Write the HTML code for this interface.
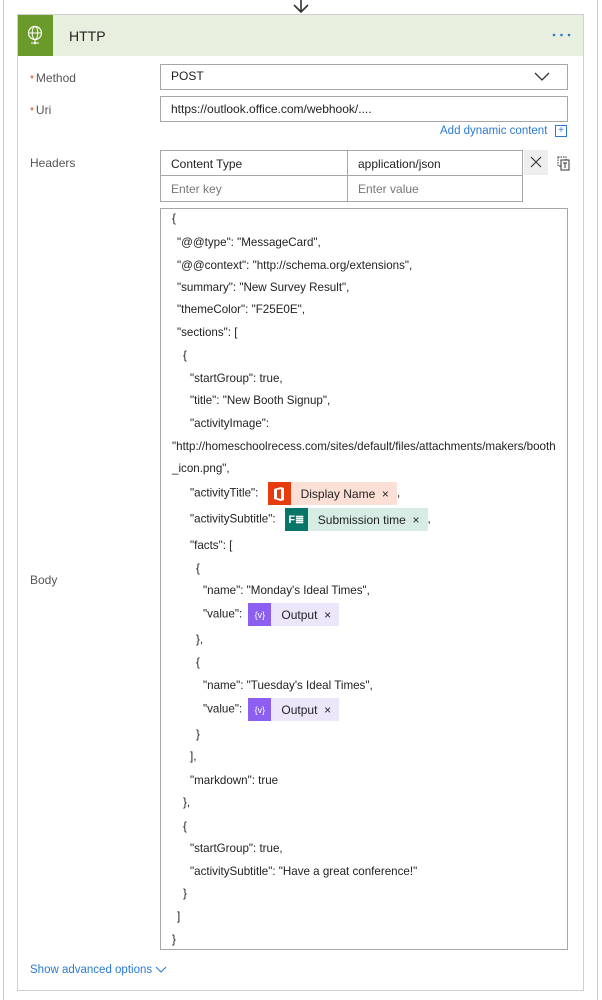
<!DOCTYPE html>
<html><head><meta charset="utf-8"><style>
*{margin:0;padding:0;box-sizing:border-box}
body{width:602px;height:1000px;background:#fff;font-family:"Liberation Sans",sans-serif;color:#222;position:relative;overflow:hidden;font-size:12px}
.a{position:absolute;white-space:nowrap}
.card{position:absolute;left:17px;top:14px;width:567px;height:977px;background:#fff;border:1px solid #d0d0d0}
.lbl{color:#555;font-size:12px}
.req{color:#d83b01;font-size:10px;margin-right:2px}
.box{position:absolute;background:#fff;border:1px solid #a6a6a6}
.l{position:absolute;white-space:nowrap;font-size:11.6px;line-height:14px;color:#222}
.chip{display:inline-flex;align-items:center;height:23px;vertical-align:middle;font-size:12px}
.chip .ic{width:23px;height:23px;display:flex;align-items:center;justify-content:center;color:#fff}
.chip .t{padding:0 8px 0 10px}
</style></head><body>
<div class="a" style="left:3px;top:0;width:1px;height:1000px;background:#ccc"></div>
<div class="a" style="left:597px;top:0;width:1px;height:1000px;background:#ccc"></div>
<svg class="a" style="left:291px;top:0" width="20" height="14"><path d="M10 0V12M3 5L10 12L17 5" stroke="#333" stroke-width="1.6" fill="none"/></svg>
<div class="card"></div>
<div class="a" style="left:18px;top:15px;width:565px;height:41px;background:#e8efdf"></div>
<div class="a" style="left:18px;top:15px;width:35px;height:41px;background:#6a9a2a"></div>
<svg class="a" style="left:26px;top:25px" width="20" height="22"><circle cx="9" cy="8" r="6.5" stroke="#fff" stroke-width="1.2" fill="none"/><ellipse cx="9" cy="8" rx="2.8" ry="6.5" stroke="#fff" stroke-width="1" fill="none"/><path d="M2.5 8H15.5M9 14.5V18M5 18H13" stroke="#fff" stroke-width="1.1"/><circle cx="9" cy="18" r="1.3" fill="#fff"/></svg>
<div class="a" style="left:69px;top:28px;font-size:14px;color:#222">HTTP</div>
<svg class="a" style="left:552px;top:33px" width="20" height="4"><circle cx="2" cy="2" r="1.3" fill="#2a7ad2"/><circle cx="9.5" cy="2" r="1.3" fill="#2a7ad2"/><circle cx="17" cy="2" r="1.3" fill="#2a7ad2"/></svg>

<div class="a lbl" style="left:30px;top:71px"><span class="req">*</span>Method</div>
<div class="box" style="left:160px;top:64px;width:408px;height:26px"></div>
<div class="a" style="left:171px;top:69px;font-size:12px">POST</div>
<svg class="a" style="left:533px;top:71px" width="18" height="12"><path d="M2 2L9 9L16 2" stroke="#333" stroke-width="1.3" fill="none"/></svg>
<div class="a lbl" style="left:30px;top:103px"><span class="req">*</span>Uri</div>
<div class="box" style="left:160px;top:96px;width:408px;height:26px"></div>
<div class="a" style="left:171px;top:102px;font-size:12px">https://outlook.office.com/webhook/....</div>
<div class="a" style="left:440px;top:125px;font-size:11.5px;color:#2a7ad2">Add dynamic content</div>
<div class="a" style="left:555px;top:125px;width:12px;height:12px;border:1.3px solid #2a7ad2;color:#2a7ad2;font-size:10px;line-height:10px;text-align:center">+</div>

<div class="a lbl" style="left:30px;top:156px">Headers</div>
<div class="box" style="left:160px;top:150px;width:363px;height:52px"></div>
<div class="a" style="left:160px;top:175px;width:363px;height:1px;background:#a6a6a6"></div>
<div class="a" style="left:347px;top:150px;width:1px;height:52px;background:#a6a6a6"></div>
<div class="a" style="left:171px;top:157px">Content Type</div>
<div class="a" style="left:358px;top:157px">application/json</div>
<div class="a" style="left:171px;top:182px;color:#777">Enter key</div>
<div class="a" style="left:358px;top:182px;color:#777">Enter value</div>
<div class="a" style="left:524px;top:150px;width:24px;height:25px;background:#eee"></div>
<svg class="a" style="left:530px;top:156px" width="12" height="12"><path d="M1 1L11 11M11 1L1 11" stroke="#333" stroke-width="1.1"/></svg>
<svg class="a" style="left:557px;top:156px" width="14" height="16"><rect x="1" y="1" width="8" height="9" stroke="#333" stroke-dasharray="1.5 1" fill="none"/><rect x="4" y="4" width="8" height="10" fill="#fff" stroke="#333"/><path d="M6 7H10M8 7V12" stroke="#333"/></svg>

<div class="a lbl" style="left:30px;top:573px">Body</div>
<div class="box" style="left:160px;top:208px;width:408px;height:742px"></div>
<div class="l" style="left:172px;top:212px">{</div>
<div class="l" style="left:177px;top:236px">"@@type": "MessageCard",</div>
<div class="l" style="left:177px;top:259px">"@@context": "http://schema.org/extensions",</div>
<div class="l" style="left:177px;top:281px">"summary": "New Survey Result",</div>
<div class="l" style="left:177px;top:303px">"themeColor": "F25E0E",</div>
<div class="l" style="left:177px;top:326px">"sections": [</div>
<div class="l" style="left:183px;top:349px">{</div>
<div class="l" style="left:190px;top:372px">"startGroup": true,</div>
<div class="l" style="left:190px;top:394px">"title": "New Booth Signup",</div>
<div class="l" style="left:190px;top:417px">"activityImage":</div>
<div class="l" style="left:172px;top:440px">"http://homeschoolrecess.com/sites/default/files/attachments/makers/booth</div>
<div class="l" style="left:172px;top:462px">_icon.png",</div>
<div class="l" style="left:190px;top:482px">"activityTitle": <span class="chip" style="margin-left:6px;background:#fce0d6"><span class="ic" style="background:#e63b0c"><svg width="14" height="16"><path d="M2 3L9 1L12 2V14L9 15L2 13ZM5 4V12L9 13V3Z" fill="#fff"/></svg></span><span class="t">Display Name&nbsp; ×</span></span>,</div>
<div class="l" style="left:190px;top:508px">"activitySubtitle": <span class="chip" style="margin-left:6px;background:#d8ece6"><span class="ic" style="background:#077568;font-weight:bold;font-size:11px">F≣</span><span class="t">Submission time&nbsp; ×</span></span>,</div>
<div class="l" style="left:190px;top:539px">"facts": [</div>
<div class="l" style="left:196px;top:562px">{</div>
<div class="l" style="left:203px;top:584px">"name": "Monday's Ideal Times",</div>
<div class="l" style="left:203px;top:603px">"value": <span class="chip" style="margin-left:3px;background:#ece6fb"><span class="ic" style="background:#8c5ff0;font-size:9px">{v}</span><span class="t">Output&nbsp; ×</span></span></div>
<div class="l" style="left:196px;top:633px">},</div>
<div class="l" style="left:196px;top:656px">{</div>
<div class="l" style="left:203px;top:679px">"name": "Tuesday's Ideal Times",</div>
<div class="l" style="left:203px;top:698px">"value": <span class="chip" style="margin-left:3px;background:#ece6fb"><span class="ic" style="background:#8c5ff0;font-size:9px">{v}</span><span class="t">Output&nbsp; ×</span></span></div>
<div class="l" style="left:196px;top:728px">}</div>
<div class="l" style="left:190px;top:750px">],</div>
<div class="l" style="left:190px;top:774px">"markdown": true</div>
<div class="l" style="left:183px;top:796px">},</div>
<div class="l" style="left:183px;top:820px">{</div>
<div class="l" style="left:190px;top:842px">"startGroup": true,</div>
<div class="l" style="left:190px;top:865px">"activitySubtitle": "Have a great conference!"</div>
<div class="l" style="left:183px;top:887px">}</div>
<div class="l" style="left:177px;top:910px">]</div>
<div class="l" style="left:172px;top:933px">}</div>

<div class="a" style="left:30px;top:964px;color:#2a7ad2;font-size:11.5px">Show advanced options</div>
<svg class="a" style="left:155px;top:966px" width="12" height="8"><path d="M1 1L6 6L11 1" stroke="#2a7ad2" stroke-width="1" fill="none"/></svg>
</body></html>
